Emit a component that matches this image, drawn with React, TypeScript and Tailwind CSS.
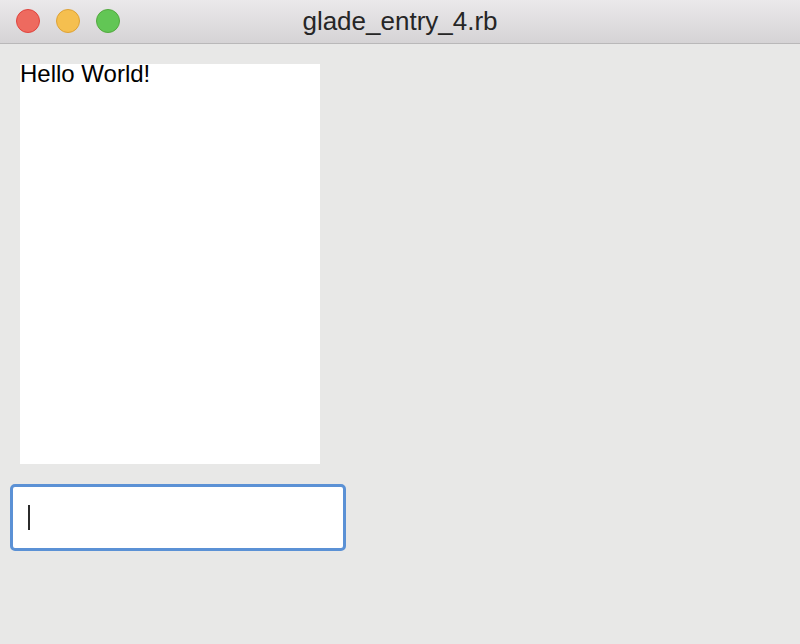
export default function App() {
  return (
    <div className="flex h-[644px] w-[800px] flex-col bg-[#e8e8e7] font-['Liberation_Sans',Arial,sans-serif]">
      <div className="relative flex h-[44px] shrink-0 items-center justify-center border-b border-[#b9b8b9] bg-gradient-to-b from-[#ebe9eb] to-[#d5d3d5]">
        <div className="absolute left-[16px] top-[9px] flex gap-[16px]">
          <span className="h-[24px] w-[24px] rounded-full border border-[#e0443e] bg-[#ee6a5f]" />
          <span className="h-[24px] w-[24px] rounded-full border border-[#dea236] bg-[#f5bf4f]" />
          <span className="h-[24px] w-[24px] rounded-full border border-[#53a93f] bg-[#62c655]" />
        </div>
        <span className="pb-[1px] text-[26px] leading-[30px] text-[#262626]">glade_entry_4.rb</span>
      </div>
      <div className="flex flex-col px-[10px] pt-[20px]">
        <div className="ml-[10px] h-[400px] w-[300px] bg-white text-[24px] leading-[20px] text-black">
          Hello World!
        </div>
        <div className="mt-[20px] flex h-[67px] w-[336px] items-center rounded-[5px] border-[3px] border-[#5b91d5] bg-white pl-[15px]">
          <span className="h-[25px] w-[2px] bg-[#2b2b2b]" />
        </div>
      </div>
    </div>
  );
}
